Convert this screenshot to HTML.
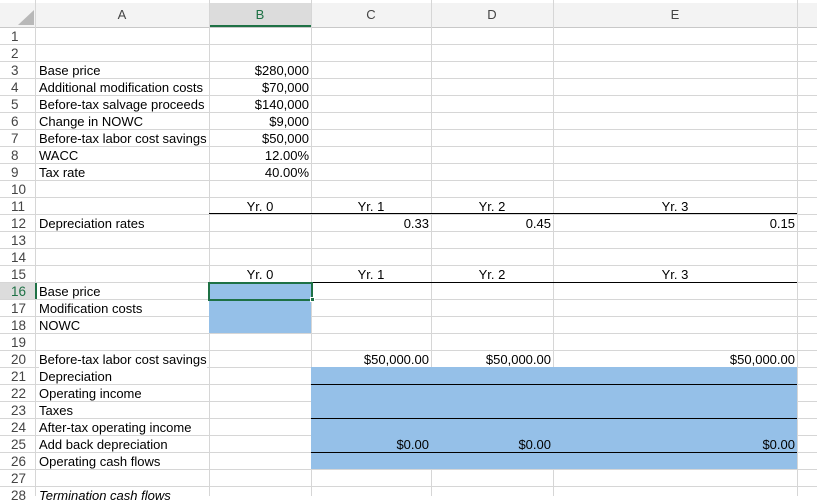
<!DOCTYPE html>
<html><head><style>
body{margin:0;width:817px;height:496px;overflow:hidden;background:#fff;font-family:"Liberation Sans",Arial,sans-serif;font-size:13px;color:#000;position:relative}
div{position:absolute;box-sizing:border-box}
.vl{top:0;width:1px;height:496px;background:#d6d6d6}
.hl{left:0;height:1px;width:817px;background:#d6d6d6}
.t{height:17px;line-height:17px;white-space:nowrap}
.r{text-align:right}
.c{text-align:center}
.rn{left:0;width:33px;text-align:left;padding-left:11px;color:#444;height:17px;line-height:17px;font-size:13.5px}
.blk{height:1px;background:#000}
.blue{background:#95c0e8}
</style></head><body>
<div style="left:0;top:0;width:817px;height:27px;background:#f3f3f3"></div>
<div style="left:0;top:0;width:817px;height:3px;background:#fff"></div>
<div style="left:209px;top:3px;width:102px;height:24px;background:#dcdcdc"></div>
<div style="left:209px;top:25px;width:102px;height:2px;background:#1e7145"></div>
<div style="left:0;top:27px;width:817px;height:1px;background:#c8c8c8"></div>
<svg style="position:absolute;left:18px;top:10px" width="16" height="15"><polygon points="16,0 16,15 0,15" fill="#b8b8b8"/></svg>
<div class="t c" style="left:35px;top:6px;width:174px;color:#444">A</div>
<div class="t c" style="left:209px;top:6px;width:102px;color:#1e7145">B</div>
<div class="t c" style="left:311px;top:6px;width:120px;color:#444">C</div>
<div class="t c" style="left:431px;top:6px;width:122px;color:#444">D</div>
<div class="t c" style="left:553px;top:6px;width:244px;color:#444">E</div>
<div class="vl" style="left:35px"></div>
<div class="vl" style="left:209px;top:0"></div>
<div class="vl" style="left:311px"></div>
<div class="vl" style="left:431px"></div>
<div class="vl" style="left:553px"></div>
<div class="vl" style="left:797px"></div>
<div class="hl" style="top:44px"></div><div class="hl" style="top:61px"></div><div class="hl" style="top:78px"></div><div class="hl" style="top:95px"></div><div class="hl" style="top:112px"></div><div class="hl" style="top:129px"></div><div class="hl" style="top:146px"></div><div class="hl" style="top:163px"></div><div class="hl" style="top:180px"></div><div class="hl" style="top:197px"></div><div class="hl" style="top:214px"></div><div class="hl" style="top:231px"></div><div class="hl" style="top:248px"></div><div class="hl" style="top:265px"></div><div class="hl" style="top:282px"></div><div class="hl" style="top:299px"></div><div class="hl" style="top:316px"></div><div class="hl" style="top:333px"></div><div class="hl" style="top:350px"></div><div class="hl" style="top:367px"></div><div class="hl" style="top:384px"></div><div class="hl" style="top:401px"></div><div class="hl" style="top:418px"></div><div class="hl" style="top:435px"></div><div class="hl" style="top:452px"></div><div class="hl" style="top:469px"></div><div class="hl" style="top:486px"></div>
<div class="blue" style="left:209px;top:283px;width:102px;height:50px"></div>
<div class="blue" style="left:311px;top:367px;width:486px;height:102px"></div>
<div style="left:0;top:283px;width:35px;height:16px;background:#dcdcdc"></div>
<div style="left:35px;top:283px;width:2px;height:16px;background:#1e7145"></div>
<div class="blk" style="left:209px;top:213px;width:588px"></div>
<div class="blk" style="left:311px;top:282px;width:486px"></div>
<div class="blk" style="left:311px;top:384px;width:486px"></div>
<div class="blk" style="left:311px;top:418px;width:486px"></div>
<div class="blk" style="left:311px;top:452px;width:486px"></div>
<div style="left:208px;top:282px;width:105px;height:19px;border:2px solid #1e7145"></div>
<div style="left:310px;top:297px;width:5px;height:5px;background:#1e7145;border:1px solid #fff"></div>
<div class="rn" style="top:28px">1</div><div class="rn" style="top:45px">2</div><div class="rn" style="top:62px">3</div><div class="rn" style="top:79px">4</div><div class="rn" style="top:96px">5</div><div class="rn" style="top:113px">6</div><div class="rn" style="top:130px">7</div><div class="rn" style="top:147px">8</div><div class="rn" style="top:164px">9</div><div class="rn" style="top:181px">10</div><div class="rn" style="top:198px">11</div><div class="rn" style="top:215px">12</div><div class="rn" style="top:232px">13</div><div class="rn" style="top:249px">14</div><div class="rn" style="top:266px">15</div><div class="rn" style="top:283px;color:#1e7145">16</div><div class="rn" style="top:300px">17</div><div class="rn" style="top:317px">18</div><div class="rn" style="top:334px">19</div><div class="rn" style="top:351px">20</div><div class="rn" style="top:368px">21</div><div class="rn" style="top:385px">22</div><div class="rn" style="top:402px">23</div><div class="rn" style="top:419px">24</div><div class="rn" style="top:436px">25</div><div class="rn" style="top:453px">26</div><div class="rn" style="top:470px">27</div><div class="rn" style="top:487px">28</div>
<div class="t" style="left:39px;top:62px">Base price</div>
<div class="t" style="left:39px;top:79px">Additional modification costs</div>
<div class="t" style="left:39px;top:96px">Before-tax salvage proceeds</div>
<div class="t" style="left:39px;top:113px">Change in NOWC</div>
<div class="t" style="left:39px;top:130px;width:170px;overflow:hidden">Before-tax labor cost savings</div>
<div class="t" style="left:39px;top:147px">WACC</div>
<div class="t" style="left:39px;top:164px">Tax rate</div>
<div class="t" style="left:39px;top:215px">Depreciation rates</div>
<div class="t" style="left:39px;top:283px">Base price</div>
<div class="t" style="left:39px;top:300px">Modification costs</div>
<div class="t" style="left:39px;top:317px">NOWC</div>
<div class="t" style="left:39px;top:351px;background:#fff">Before-tax labor cost savings</div>
<div class="t" style="left:39px;top:368px">Depreciation</div>
<div class="t" style="left:39px;top:385px">Operating income</div>
<div class="t" style="left:39px;top:402px">Taxes</div>
<div class="t" style="left:39px;top:419px">After-tax operating income</div>
<div class="t" style="left:39px;top:436px">Add back depreciation</div>
<div class="t" style="left:39px;top:453px">Operating cash flows</div>
<div class="t" style="left:39px;top:487px;font-style:italic">Termination cash flows</div>
<div class="t r" style="left:209px;top:62px;width:100px">$280,000</div>
<div class="t r" style="left:209px;top:79px;width:100px">$70,000</div>
<div class="t r" style="left:209px;top:96px;width:100px">$140,000</div>
<div class="t r" style="left:209px;top:113px;width:100px">$9,000</div>
<div class="t r" style="left:209px;top:130px;width:100px">$50,000</div>
<div class="t r" style="left:209px;top:147px;width:100px">12.00%</div>
<div class="t r" style="left:209px;top:164px;width:100px">40.00%</div>
<div class="t c" style="left:209px;top:198px;width:102px">Yr. 0</div>
<div class="t c" style="left:311px;top:198px;width:120px">Yr. 1</div>
<div class="t c" style="left:431px;top:198px;width:122px">Yr. 2</div>
<div class="t c" style="left:553px;top:198px;width:244px">Yr. 3</div>
<div class="t c" style="left:209px;top:266px;width:102px">Yr. 0</div>
<div class="t c" style="left:311px;top:266px;width:120px">Yr. 1</div>
<div class="t c" style="left:431px;top:266px;width:122px">Yr. 2</div>
<div class="t c" style="left:553px;top:266px;width:244px">Yr. 3</div>
<div class="t r" style="left:311px;top:215px;width:118px">0.33</div>
<div class="t r" style="left:431px;top:215px;width:120px">0.45</div>
<div class="t r" style="left:553px;top:215px;width:242px">0.15</div>
<div class="t r" style="left:311px;top:351px;width:118px">$50,000.00</div>
<div class="t r" style="left:431px;top:351px;width:120px">$50,000.00</div>
<div class="t r" style="left:553px;top:351px;width:242px">$50,000.00</div>
<div class="t r" style="left:311px;top:436px;width:118px">$0.00</div>
<div class="t r" style="left:431px;top:436px;width:120px">$0.00</div>
<div class="t r" style="left:553px;top:436px;width:242px">$0.00</div>
</body></html>
